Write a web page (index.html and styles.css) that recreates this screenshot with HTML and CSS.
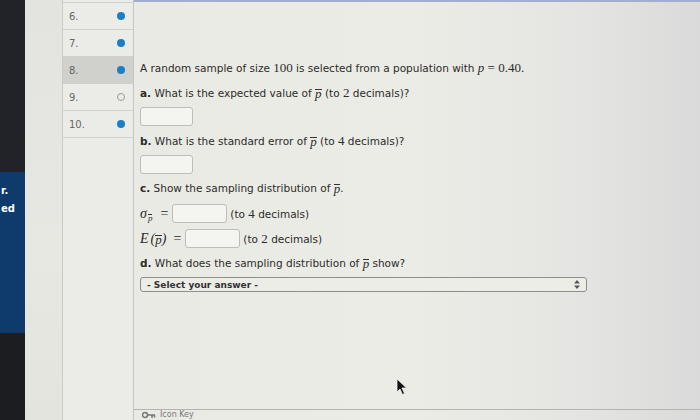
FILE: index.html
```html
<!DOCTYPE html>
<html>
<head>
<meta charset="utf-8">
<link rel="stylesheet" href="styles.css">
</head>
<body>
<div class="page">
  <div class="edge">
    <div class="edge-top"></div>
    <div class="edge-panel"><span>r.</span><span>ed</span></div>
    <div class="edge-bottom"></div>
  </div>
  <div class="gutter"></div>
  <div class="nav">
    <div class="nav-row"><span>6.</span><i class="dot"></i></div>
    <div class="nav-row"><span>7.</span><i class="dot"></i></div>
    <div class="nav-row active"><span>8.</span><i class="dot"></i></div>
    <div class="nav-row"><span>9.</span><i class="dot empty"></i></div>
    <div class="nav-row"><span>10.</span><i class="dot"></i></div>
    <div class="nav-fill"></div>
  </div>
  <div class="main">
    <div class="content">
      <p class="line intro">A random sample of size <span class="num">100</span> is selected from a population with <span class="mi">p</span><span class="num"> = 0.40.</span></p>
      <p class="line"><b>a.</b> What is the expected value of <span class="pbar">p</span> (to <span class="num">2</span> decimals)?</p>
      <div class="box-row"><span class="box"></span></div>
      <p class="line"><b>b.</b> What is the standard error of <span class="pbar">p</span> (to <span class="num">4</span> decimals)?</p>
      <div class="box-row"><span class="box"></span></div>
      <p class="line"><b>c.</b> Show the sampling distribution of <span class="pbar">p</span>.</p>
      <div class="eq-row"><span class="math">σ<sub class="pbar small">p</sub><span class="eq">=</span></span><span class="box box-wide"></span><span class="note">(to <span class="num">4</span> decimals)</span></div>
      <div class="eq-row"><span class="math"><i>E</i>(<span class="pbar">p</span>)<span class="eq eq-e">=</span></span><span class="box box-wide"></span><span class="note">(to <span class="num">2</span> decimals)</span></div>
      <p class="line"><b>d.</b> What does the sampling distribution of <span class="pbar">p</span> show?</p>
      <div class="select"><span>- Select your answer -</span><svg class="arrows" width="6" height="9" viewBox="0 0 6 9"><path d="M3 0 L6 3.5 H0 Z M0 5.5 H6 L3 9 Z" fill="#555"/></svg></div>
    </div>
    <div class="footer">
      <svg width="14" height="8" viewBox="0 0 14 8"><circle cx="3" cy="4" r="2.5" fill="none" stroke="#777" stroke-width="1.5"/><path d="M5.5 4 H13 M10 4 V7 M12.5 4 V6.5" stroke="#777" stroke-width="1.5"/></svg>
      <span>Icon Key</span>
    </div>
    <svg class="cursor" width="12" height="18" viewBox="0 0 12 18"><path d="M1 1 L1 14 L4 11 L6.5 16.5 L8.5 15.5 L6 10 L10.5 10 Z" fill="#111" stroke="#eee" stroke-width="0.8"/></svg>
  </div>
</div>
</body>
</html>
```
FILE: styles.css
```css
html, body {
  margin: 0;
  padding: 0;
  width: 700px;
  height: 420px;
  overflow: hidden;
}
body {
  font-family: "DejaVu Sans", Verdana, sans-serif;
  color: #2b2b2b;
  background: #e6e6e1;
}
.page {
  display: flex;
  height: 420px;
}
.edge {
  width: 25px;
  display: flex;
  flex-direction: column;
  background: #1f2024;
  overflow: hidden;
}
.edge-top {
  height: 172px;
  background: #222328;
}
.edge-panel {
  height: 161px;
  background: #0f3a6c;
  display: flex;
  flex-direction: column;
  padding: 10px 0 0 1px;
  box-sizing: border-box;
  color: #fff;
  font-weight: bold;
  font-size: 10px;
  line-height: 18px;
}
.edge-bottom {
  flex: 1;
  background: #1c1d21;
}
.gutter {
  width: 37px;
  background: linear-gradient(180deg, #e3e3df 0%, #e8e8e3 60%, #e4e4df 100%);
}
.nav {
  width: 72px;
  display: flex;
  flex-direction: column;
  border-left: 1px solid #cacac6;
  border-right: 1px solid #c4c4c0;
  background: #ebebe7;
  padding-top: 2px;
  box-sizing: border-box;
}
.nav-row {
  height: 27px;
  border-top: 1px solid #d0d0cc;
  box-sizing: border-box;
  display: flex;
  align-items: center;
  justify-content: space-between;
  padding: 0 8px 0 6px;
  font-size: 10px;
  color: #666;
}
.nav-row.active {
  background: #d0d0cc;
}
.nav-fill {
  flex: 1;
  border-top: 1px solid #d0d0cc;
}
.dot {
  width: 8px;
  height: 8px;
  border-radius: 50%;
  background: #1b7fc6;
}
.dot.empty {
  background: transparent;
  border: 1px solid #9a9a9a;
  box-sizing: border-box;
}
.main {
  flex: 1;
  position: relative;
  display: flex;
  flex-direction: column;
  border-top: 2px solid #9fb0cf;
  background: linear-gradient(90deg, #eaeae4 0%, #ececE6 50%, #e4e4e2 80%, #dadada 100%);
}
.content {
  flex: 1;
  padding: 0 0 0 6px;
}
.line {
  margin: 0;
  font-size: 10.5px;
  height: 25px;
  line-height: 25px;
  white-space: nowrap;
}
.intro {
  margin-top: 53px;
}
.num {
  font-family: "Liberation Serif", "DejaVu Serif", serif;
  font-size: 13px;
}
.mi {
  font-family: "Liberation Serif", serif;
  font-style: italic;
  font-size: 13px;
}
.pbar {
  font-family: "Liberation Serif", serif;
  font-style: italic;
  font-size: 13px;
  display: inline-block;
  line-height: 8px;
  border-top: 1px solid #333;
  padding-top: 0;
  vertical-align: -1px;
}
.pbar.small {
  font-size: 9px;
  line-height: 6px;
  vertical-align: -3px;
  margin-left: 1px;
}
.box-row {
  height: 23px;
  display: flex;
  align-items: center;
}
.box {
  display: inline-block;
  width: 51px;
  height: 17px;
  border: 1px solid #bdbdb9;
  border-radius: 3px;
  background: #f4f4f0;
}
.box-wide {
  width: 53px;
}
.eq-row {
  height: 25px;
  display: flex;
  align-items: center;
  font-size: 10.5px;
}
.math {
  font-family: "Liberation Serif", serif;
  font-size: 14px;
  font-style: italic;
  margin-right: 4px;
}
.math i {
  font-style: italic;
  margin-right: 2px;
}
.eq {
  font-style: normal;
  margin: 0 0 0 8px;
}
.eq-e {
  margin-left: 7px;
}
.note {
  margin-left: 3px;
}
.select {
  margin-top: 1px;
  width: 447px;
  height: 15px;
  border: 1px solid #8e8e8a;
  border-radius: 3px;
  background: #ededE8;
  display: flex;
  align-items: center;
  justify-content: space-between;
  padding: 0 6px 0 6px;
  box-sizing: border-box;
  font-size: 9px;
  font-weight: bold;
  color: #333;
}
.arrows {
  display: block;
}
.footer {
  height: 11px;
  box-sizing: border-box;
  border-top: 1px solid #b4b4b0;
  display: flex;
  align-items: center;
  gap: 4px;
  padding: 0 0 0 8px;
  font-size: 8px;
  line-height: 10px;
  color: #777;
  overflow: hidden;
}
.cursor {
  position: absolute;
  left: 262px;
  top: 376px;
}
```
